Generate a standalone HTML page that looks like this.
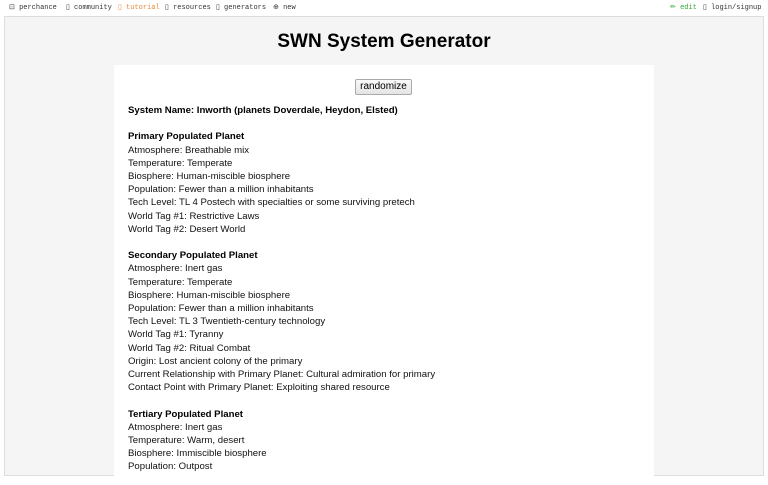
<!DOCTYPE html>
<html><head><style>
body{margin:0;width:768px;height:480px;overflow:hidden;background:#fff;font-family:"Liberation Sans",sans-serif;position:relative}
.top{position:absolute;top:0;left:0;right:0;height:16px;font-family:"Liberation Mono",monospace;font-size:7px;color:#333;line-height:16px}
.top span{position:absolute;top:0;white-space:nowrap}
.panel{position:absolute;left:4px;top:16px;width:758px;height:458px;border:1px solid #ddd;background:#f5f5f5;overflow:hidden}
h1{position:absolute;top:31px;left:0;width:768px;text-align:center;margin:0;font-size:19px;font-weight:bold;color:#000}
.card{position:absolute;left:114px;top:65px;width:540px;height:420px;background:#fff}
.btn{position:absolute;left:241px;top:14px;width:55px;height:14px;border:1px solid #aaa;background:linear-gradient(#fafafa,#e4e4e4);font-size:10px;text-align:center;line-height:14px;border-radius:2px;color:#000}
.txt{position:absolute;left:14px;top:39px;font-size:9.6px;line-height:13.2px;color:#111;white-space:pre}
b{font-weight:bold;color:#000}
</style></head><body>
<div class="top">
<span style="left:9px">⊡ perchance</span>
<span style="left:66px">▯ community</span>
<span style="left:118px;color:#e8883a">▯ tutorial</span>
<span style="left:165px">▯ resources</span>
<span style="left:216px">▯ generators</span>
<span style="left:273px">⊕ new</span>
<span style="left:670px;color:#3a3">✏ edit</span>
<span style="left:703px">▯ login/signup</span>
</div>
<div class="panel"></div>
<h1>SWN System Generator</h1>
<div class="card">
<div class="btn">randomize</div>
<div class="txt"><b>System Name: Inworth (planets Doverdale, Heydon, Elsted)</b>

<b>Primary Populated Planet</b>
Atmosphere: Breathable mix
Temperature: Temperate
Biosphere: Human-miscible biosphere
Population: Fewer than a million inhabitants
Tech Level: TL 4 Postech with specialties or some surviving pretech
World Tag #1: Restrictive Laws
World Tag #2: Desert World

<b>Secondary Populated Planet</b>
Atmosphere: Inert gas
Temperature: Temperate
Biosphere: Human-miscible biosphere
Population: Fewer than a million inhabitants
Tech Level: TL 3 Twentieth-century technology
World Tag #1: Tyranny
World Tag #2: Ritual Combat
Origin: Lost ancient colony of the primary
Current Relationship with Primary Planet: Cultural admiration for primary
Contact Point with Primary Planet: Exploiting shared resource

<b>Tertiary Populated Planet</b>
Atmosphere: Inert gas
Temperature: Warm, desert
Biosphere: Immiscible biosphere
Population: Outpost</div>
</div>
</body></html>
